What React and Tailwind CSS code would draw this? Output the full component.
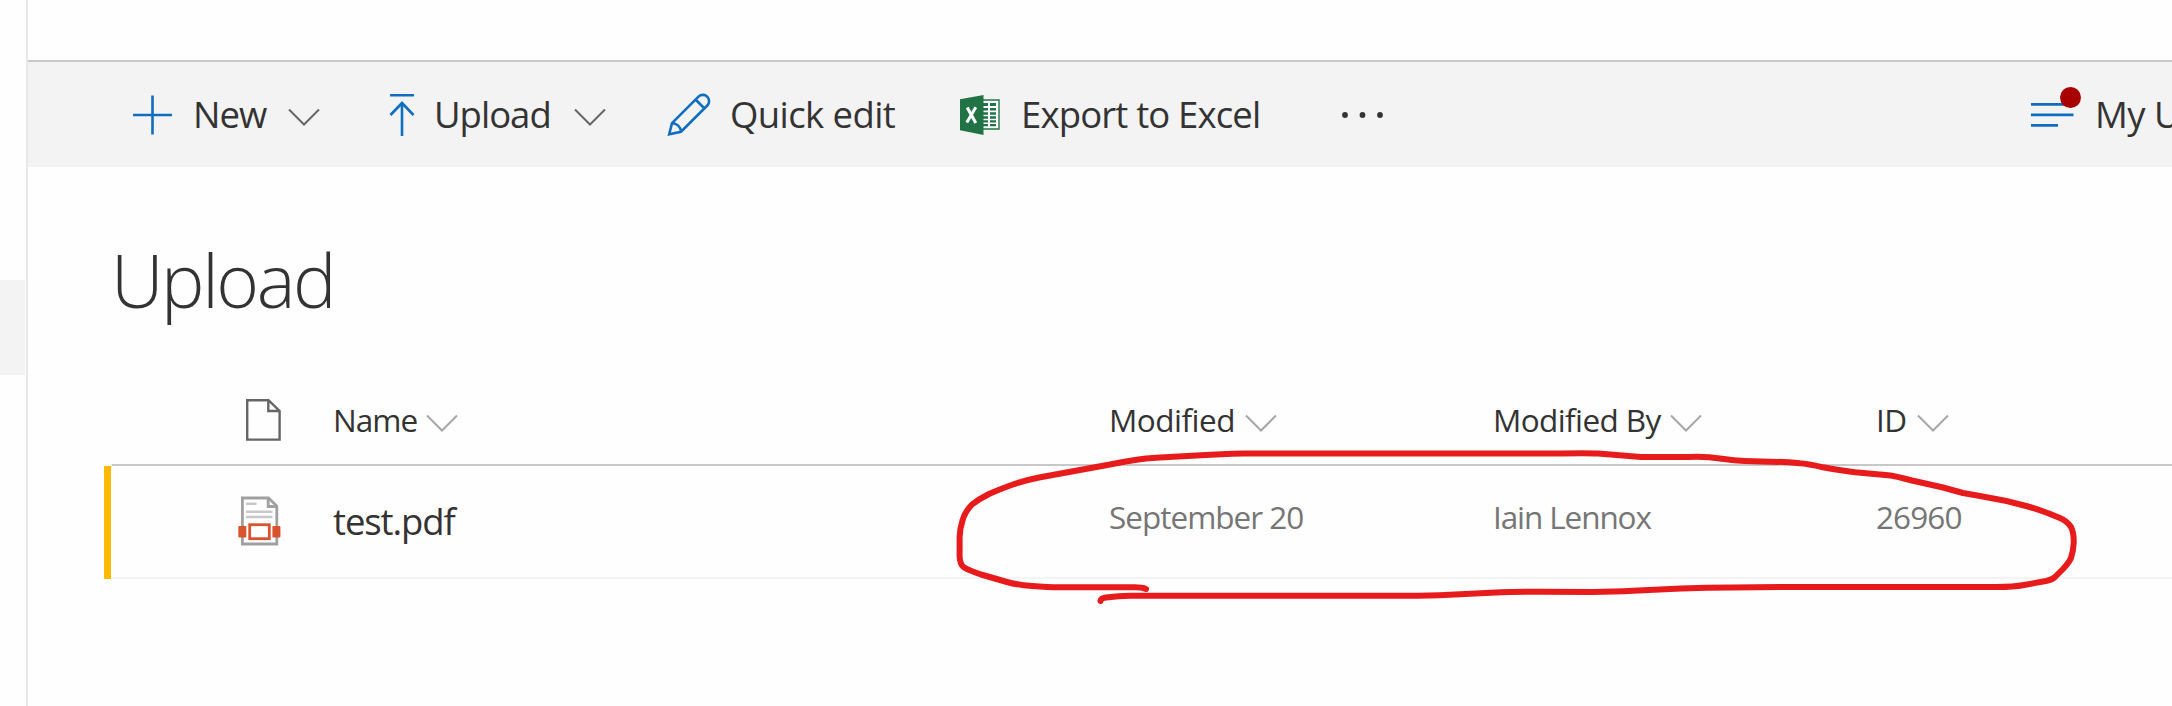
import React from "react";

const COLUMNS = [
  { label: "Name", width: "w-[776px]", text: "w-[93px] tracking-[-1px]" },
  { label: "Modified", width: "w-[384px]", text: "w-[136px] tracking-[-0.5px]" },
  { label: "Modified By", width: "w-[383px]", text: "w-[177px] tracking-[-0.6px]" },
  { label: "ID", width: "w-[200px]", text: "w-[41px] tracking-[-0.5px]" },
];

function Chevron({ className }) {
  return (
    <svg width="32" height="18" viewBox="0 0 32 18" fill="none" stroke="currentColor" strokeWidth="2" className={`shrink-0 ${className}`}>
      <path d="M1 1.5 16 16.5 31 1.5" />
    </svg>
  );
}

function PlusIcon() {
  return (
    <svg width="40" height="40" viewBox="0 0 40 40" stroke="#106ebe" strokeWidth="2.6" className="shrink-0">
      <path d="M1 20H40M20.5 0.5V39.5" />
    </svg>
  );
}

function UploadIcon() {
  return (
    <svg width="26" height="44" viewBox="0 0 26 44" fill="none" stroke="#106ebe" strokeWidth="2.6" className="ml-[69px] shrink-0">
      <path d="M1 2.2H25M13 43V10M1.5 22 13 10 24.5 22" />
    </svg>
  );
}

function PencilIcon() {
  return (
    <svg width="44" height="44" viewBox="0 0 44 44" fill="none" stroke="#106ebe" strokeWidth="2.6" className="ml-[61px] shrink-0">
      <path d="M2.2 41.3 5 30.2 31.5 3.7C34 1.2 38 1.4 40.2 3.6 42.6 6 42.8 10 40.3 12.5L14 38.7ZM28.5 6.5 37.5 15.5M5 30.2C10 30.5 13.5 34 14 38.7" />
    </svg>
  );
}

function ExcelIcon() {
  return (
    <svg width="40" height="40" viewBox="0 0 40 40" className="shrink-0">
      <path d="M22 5H39V34H22Z" fill="#fff" stroke="#217346" strokeWidth="1.4" />
      <path
        d="M23 8H28V11H23ZM30 8H36V11H30ZM23 13H28V15.5H23ZM30 13H36V15.5H30ZM23 17.3H28V19.8H23ZM30 17.3H36V19.8H30ZM23 21.3H28V23.8H23ZM30 21.3H36V23.8H30ZM23 25.3H28V27.5H23ZM30 25.3H36V27.5H30ZM23 29H28V31.2H23ZM30 29H36V31.2H30Z"
        fill="#217346"
      />
      <path d="M0 4.3 23.5 0V40L0 35.3Z" fill="#217346" />
      <path d="M7.2 12.6 15.8 28M15.8 12.2 6.8 27.6" stroke="#fff" strokeWidth="3" />
    </svg>
  );
}

function ViewIcon() {
  return (
    <div className="relative h-[24px] w-[43px] shrink-0">
      <svg width="43" height="24" viewBox="0 0 43 24" stroke="#106ebe" strokeWidth="2.7">
        <path d="M0 1.4H38M0 11.8H42.5M0 22.4H27" />
      </svg>
      <span className="absolute -top-4 left-[29px] size-[21px] rounded-full bg-[#a80000]" />
    </div>
  );
}

function FileIcon() {
  return (
    <svg width="35" height="42" viewBox="0 0 35 42" fill="none" stroke="#666" strokeWidth="2.4" className="mb-[3px] shrink-0">
      <path d="M1.2 1.2H22.5L33.6 12V40.6H1.2ZM22.3 1.1V12H33.7" />
    </svg>
  );
}

function PdfIcon() {
  return (
    <svg width="43" height="50" viewBox="0 0 43 50" fill="none" className="mb-px shrink-0">
      <path d="M4.4 2H30.5L38.8 10V48H4.4ZM30.2 2V10.5H38.8" stroke="#a0a0a0" strokeWidth="2.8" />
      <path d="M8 7.8H18.5M8 15.8H34.5M8 21H34.5" stroke="#c8c8c8" strokeWidth="2.4" />
      <rect x="11.7" y="28.7" width="19.6" height="14" fill="#fff" stroke="#d9532f" strokeWidth="2.8" />
      <rect x="0.3" y="30" width="8" height="11.4" rx="1" fill="#d9532f" />
      <rect x="34.4" y="30" width="8" height="11.4" rx="1" fill="#d9532f" />
    </svg>
  );
}

// freehand highlight drawn over the row values
function InkCircle() {
  return (
    <svg
      width="2172"
      height="706"
      viewBox="0 0 2172 706"
      fill="none"
      stroke="#e71b1b"
      strokeWidth="6"
      strokeLinecap="round"
      strokeLinejoin="round"
      className="pointer-events-none absolute top-0 left-0"
    >
      <path d="M1100.5 601C1101 598 1104 597.8 1109 597.2Q1117 596 1130 595.7H1418Q1440 595.5 1460 594.2L1501 592.2Q1520 591.5 1592 592Q1615 591.9 1633 590.8L1681 588.5Q1735 587 1782 587H1996Q2014 587 2024 585L2046 581Q2053 579.5 2056 576L2063 569Q2069 562.5 2071 558Q2073.5 550 2073.7 543Q2074 533 2071 527Q2067 521 2060 518Q2045 511.5 2028 506.5Q2005 500 1980 496L1963 493L1943 487.5L1912 480.5Q1895 476 1888 475.3L1855 472.3Q1836 470 1823 467.3Q1807 463.5 1800 463.2Q1785 461.8 1770 461.7L1745 461Q1734 460.5 1722 458.8L1709 457.3Q1700 456.5 1688 457H1641L1598 453.5Q1590 453 1560 453.4H1244Q1220 453.8 1201 455.2L1160 457.6Q1145 458.4 1135 460Q1122 462 1110 464.5L1039 477.5Q1024 480.5 1013 484.5Q999 489.5 989 494Q979 499 972 504.5Q965 511.5 962.5 520.5Q960 528 959.6 537V556Q959.8 564 963.5 567Q969 570.5 981 574.5L1007 582Q1018 585 1032 586Q1048 587.3 1060 587.3H1135Q1142 587.3 1146 589" />
    </svg>
  );
}

export default function App() {
  return (
    <div
      className="relative flex h-[706px] w-[2172px] overflow-hidden bg-[#fefefe] text-[#333]"
      style={{ fontFamily: '"Open Sans", "Noto Sans", sans-serif' }}
    >
      <aside className="w-7 shrink-0 border-r-2 border-[#e8e8e8] pt-[280px]">
        <div className="h-[95px] w-[25px] bg-[#f3f3f3]" />
      </aside>

      <main className="w-[2144px] shrink-0 pt-[60px]">
        <div className="flex h-[107px] items-center border-t-2 border-[#c8c8c8] bg-[#f3f3f3] pl-[104px] text-[36.5px] whitespace-nowrap">
          <PlusIcon />
          <span className="ml-[21px] w-[95px] tracking-[-1px]">New</span>
          <Chevron className="mt-1 text-[#666]" />
          <UploadIcon />
          <span className="ml-[19px] w-[140px] tracking-[-1px]">Upload</span>
          <Chevron className="mt-1 text-[#666]" />
          <PencilIcon />
          <span className="ml-[19px] w-[230px] tracking-[-0.6px]">Quick edit</span>
          <ExcelIcon />
          <span className="ml-[21px] w-[321px] tracking-[-0.85px]">Export to Excel</span>
          <svg width="46" height="6" viewBox="0 0 46 6" fill="#333" className="shrink-0">
            <circle cx="3" cy="3" r="2.9" />
            <circle cx="20.5" cy="3" r="2.9" />
            <circle cx="38" cy="3" r="2.9" />
          </svg>
          <div className="ml-auto flex w-[141px] shrink-0 items-center">
            <ViewIcon />
            <span className="ml-[21px] tracking-[-0.5px]">My U</span>
          </div>
        </div>

        <h1 className="mt-[63px] ml-[83px] h-[100px] text-[73px] leading-[100px] font-light tracking-[-2.4px]">Upload</h1>

        <section className="mt-[48px] ml-[76px] whitespace-nowrap">
          <div className="ml-2 flex h-[88px] items-center border-b-2 border-[#c8c8c8] text-[31.5px]">
            <div className="flex w-[221px] shrink-0 pl-[134px]">
              <FileIcon />
            </div>
            {COLUMNS.map((col) => (
              <div key={col.label} className={`mb-0.5 flex shrink-0 items-center ${col.width}`}>
                <span className={col.text}>{col.label}</span>
                <Chevron className="mt-[5px] text-[#a6a6a6]" />
              </div>
            ))}
          </div>

          <div className="flex h-[113px]">
            <div className="mr-px w-[7px] shrink-0 bg-[#ffb900]" />
            <div className="flex flex-1 items-center border-b-2 border-[#f4f4f4] text-[31.5px] text-[#767676]">
              <div className="flex w-[221px] shrink-0 pl-[126px]">
                <PdfIcon />
              </div>
              <div className="w-[776px] shrink-0 text-[36.5px] tracking-[-1.1px] text-[#333]">test.pdf</div>
              <div className="mb-2.5 w-[384px] shrink-0 tracking-[-1px]">September 20</div>
              <div className="mb-2.5 w-[383px] shrink-0 tracking-[-1.1px]">Iain Lennox</div>
              <div className="mb-2.5 shrink-0 tracking-[-0.9px]">26960</div>
            </div>
          </div>
        </section>
      </main>

      <InkCircle />
    </div>
  );
}
